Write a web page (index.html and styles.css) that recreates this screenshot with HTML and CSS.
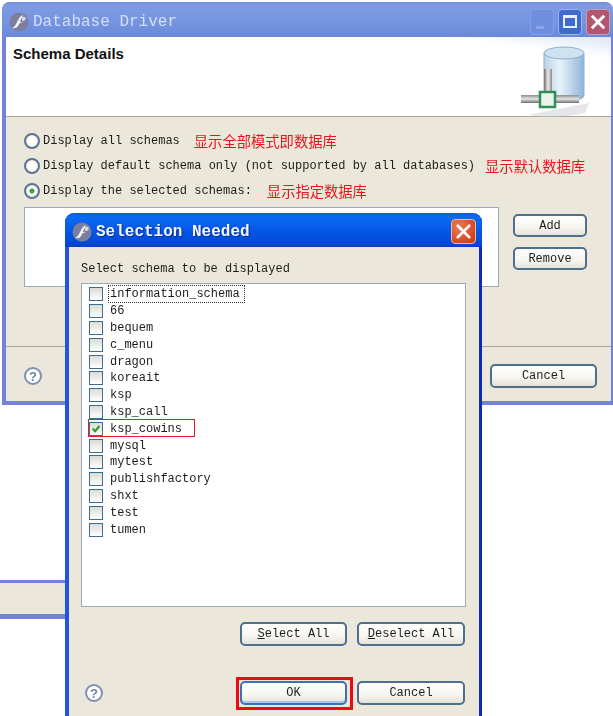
FILE: index.html
```html
<!DOCTYPE html>
<html lang="zh-CN">
<head>
  <meta charset="UTF-8" />
  <title>Selection Needed</title>
  <meta name="viewport" content="width=device-width, initial-scale=1.0" />
  <link rel="stylesheet" href="styles.css">
</head>
<body>
  <svg class="defs" width="0" height="0">
    <symbol id="eclipse" viewBox="0 0 20 20">
      <circle cx="10" cy="10" r="9.5" fill="#7b7f9e"/>
      <path d="M3 16 C8 15 8 5 14 3 C12 7 11 9 11 10 L14 10 C12 11 10 11 10 12 C9 15 7 17 3 16 Z" fill="#f2f3f8"/>
      <path d="M13 5 C17 4 18 7 15 9 L13 9 Z" fill="#d5d7e6"/>
    </symbol>
  </svg>

  <div class="desktop">
    <!-- window behind, only its lower edge shows -->
    <div class="strip"></div>

    <div class="window window-back">
      <div class="titlebar titlebar-back">
        <svg class="app-icon"><use href="#eclipse"/></svg>
        <span class="title-text">Database Driver</span>
        <span class="ctl ctl-min"><i></i></span>
        <span class="ctl ctl-max"><i></i></span>
        <span class="ctl ctl-close">
          <svg viewBox="0 0 16 16"><path d="M2.5 2.5 L13.5 13.5 M13.5 2.5 L2.5 13.5" stroke="#fff" stroke-width="2.6"/></svg>
        </span>
      </div>

      <div class="banner">
        <h2>Schema Details</h2>
        <svg class="db-icon" viewBox="0 0 80 74">
          <defs>
            <linearGradient id="cyl" x1="0" x2="1" y1="0" y2="0">
              <stop offset="0" stop-color="#b9d4e6"/>
              <stop offset="0.4" stop-color="#e8f3fa"/>
              <stop offset="1" stop-color="#8fb2d8"/>
            </linearGradient>
            <linearGradient id="pipe" x1="0" x2="0" y1="0" y2="1">
              <stop offset="0" stop-color="#8d8d8d"/>
              <stop offset="0.5" stop-color="#e6e6e6"/>
              <stop offset="1" stop-color="#6c6c6c"/>
            </linearGradient>
            <linearGradient id="pipev" x1="0" x2="1" y1="0" y2="0">
              <stop offset="0" stop-color="#6f6f6f"/>
              <stop offset="0.5" stop-color="#ececec"/>
              <stop offset="1" stop-color="#8a8a8a"/>
            </linearGradient>
          </defs>
          <path d="M8 70 L70 58 L66 68 Q40 74 8 70 Z" fill="#d8dbe0" opacity="0.7"/>
          <path d="M25 8 V50 Q25 56 45 56 Q65 56 65 50 V8 Z" fill="url(#cyl)" stroke="#8fb0cf"/>
          <ellipse cx="45" cy="8" rx="20" ry="6" fill="#cfe2ef" stroke="#8fb0cf"/>
          <rect x="25" y="24" width="8" height="30" fill="url(#pipev)"/>
          <rect x="2" y="50" width="58" height="8" fill="url(#pipe)"/>
          <rect x="21" y="47" width="15" height="15" fill="#e8f4ec" stroke="#2f8f57" stroke-width="2.5"/>
        </svg>
      </div>

      <div class="panel">
        <div class="radio-row"><span class="radio"></span><span>Display all schemas</span><span class="note note-a">显示全部模式即数据库</span></div>
        <div class="radio-row"><span class="radio"></span><span>Display default schema only (not supported by all databases)</span><span class="note note-b">显示默认数据库</span></div>
        <div class="radio-row"><span class="radio radio-on"></span><span>Display the selected schemas:</span><span class="note note-c">显示指定数据库</span></div>
        <div class="schema-row">
          <div class="box schema-box"></div>
          <div class="side-btns">
            <button class="btn btn-side">Add</button>
            <button class="btn btn-side">Remove</button>
          </div>
        </div>
      </div>

      <div class="footer footer-back">
        <span class="help">?</span>
        <button class="btn btn-cancel-back">Cancel</button>
      </div>
    </div>

    <div class="window dialog">
      <div class="titlebar titlebar-dialog">
        <svg class="app-icon"><use href="#eclipse"/></svg>
        <span class="title-text title-dialog">Selection Needed</span>
        <span class="ctl ctl-close-dialog">
          <svg viewBox="0 0 16 16"><path d="M2.5 2.5 L13.5 13.5 M13.5 2.5 L2.5 13.5" stroke="#fff" stroke-width="2.2"/></svg>
        </span>
      </div>

      <div class="dialog-body">
        <div class="dialog-label">Select schema to be displayed</div>
        <div class="box list-box">
          <div class="item"><span class="check"></span><span class="name name-focus">information_schema</span></div>
          <div class="item"><span class="check"></span><span class="name">66</span></div>
          <div class="item"><span class="check"></span><span class="name">bequem</span></div>
          <div class="item"><span class="check"></span><span class="name">c_menu</span></div>
          <div class="item"><span class="check"></span><span class="name">dragon</span></div>
          <div class="item"><span class="check"></span><span class="name">koreait</span></div>
          <div class="item"><span class="check"></span><span class="name">ksp</span></div>
          <div class="item"><span class="check"></span><span class="name">ksp_call</span></div>
          <div class="item item-marked">
            <span class="check">
              <svg viewBox="0 0 14 14"><path d="M3 6.5 L6 9.5 L11 3.5" fill="none" stroke="#21a121" stroke-width="2.4"/></svg>
            </span>
            <span class="name">ksp_cowins</span>
          </div>
          <div class="item"><span class="check"></span><span class="name">mysql</span></div>
          <div class="item"><span class="check"></span><span class="name">mytest</span></div>
          <div class="item"><span class="check"></span><span class="name">publishfactory</span></div>
          <div class="item"><span class="check"></span><span class="name">shxt</span></div>
          <div class="item"><span class="check"></span><span class="name">test</span></div>
          <div class="item"><span class="check"></span><span class="name">tumen</span></div>
        </div>

        <div class="select-btns">
          <button class="btn btn-wide"><u>S</u>elect All</button>
          <button class="btn btn-wider"><u>D</u>eselect All</button>
        </div>

        <div class="footer footer-dialog">
          <span class="help">?</span>
          <button class="btn btn-wide btn-ok">OK</button>
          <button class="btn btn-wider">Cancel</button>
        </div>
      </div>
    </div>
  </div>
</body>
</html>
```

FILE: styles.css
```css
html, body {
  margin: 0;
  background: #fff;
}

.defs {
  position: absolute;
}

.desktop {
  position: relative;
  width: 613px;
  height: 716px;
  overflow: hidden;
  font-family: "Liberation Mono", "Noto Sans CJK SC", monospace;
  font-size: 12px;
  color: #1c1c1c;
  filter: blur(0.35px);
}

.window {
  position: absolute;
  display: flex;
  flex-direction: column;
  box-sizing: border-box;
  background: #ebe8db;
}

.strip {
  position: absolute;
  left: 0;
  top: 580px;
  width: 70px;
  height: 39px;
  box-sizing: border-box;
  background: #ebe8db;
  border-top: 3px solid #7482dc;
  border-bottom: 5px solid #7482dc;
}

/* back window */
.window-back {
  left: 2px;
  top: 2px;
  width: 611px;
  height: 403px;
  border: solid #7482dc;
  border-width: 0 2px 4px 4px;
  border-radius: 8px 8px 0 0;
}

.titlebar {
  display: flex;
  align-items: center;
  flex: none;
  box-sizing: border-box;
}

.titlebar-back {
  height: 35px;
  margin: 0 -2px 0 -4px;
  padding: 4px 3px 0 7px;
  border-radius: 8px 8px 0 0;
  background: linear-gradient(to bottom, #6f8fdc 0, #7f9be2 10%, #7494e0 60%, #6a88d8 100%);
}

.app-icon {
  width: 20px;
  height: 20px;
  flex: none;
}

.title-text {
  flex: 1;
  margin-left: 4px;
  font-size: 16px;
  color: #d5dff5;
}

.ctl {
  display: flex;
  align-items: center;
  justify-content: center;
  flex: none;
  box-sizing: border-box;
  border-radius: 4px;
}

.ctl-min, .ctl-max, .ctl-close {
  width: 24px;
  height: 26px;
  margin-left: 4px;
  border: 1px solid #9fb4ea;
}

.ctl-min {
  background: #6f8edd;
  border-color: #86a0e6;
  align-items: flex-end;
  justify-content: flex-start;
}

.ctl-min i {
  width: 8px;
  height: 3px;
  margin: 0 0 5px 5px;
  background: #8ea5e6;
}

.ctl-max {
  background: #3f6bd0;
}

.ctl-max i {
  width: 14px;
  height: 13px;
  box-sizing: border-box;
  border: 2px solid #e8eefb;
  border-top-width: 3px;
}

.ctl-close {
  background: #b4566f;
  border-color: #c4a0b8;
}

.ctl-close svg {
  width: 18px;
  height: 18px;
}

.banner {
  display: flex;
  justify-content: space-between;
  flex: none;
  box-sizing: border-box;
  height: 80px;
  padding: 8px 12px 0 7px;
  border-bottom: 1px solid #aca899;
  background: linear-gradient(to bottom left, #dce7f6 0, #fff 14%, #fff 100%);
}

.banner h2 {
  margin: 0;
  font-family: "Liberation Sans", sans-serif;
  font-size: 15px;
  font-weight: bold;
  line-height: 18px;
  color: #111;
}

.db-icon {
  width: 80px;
  height: 74px;
}

.panel {
  flex: 1;
  padding: 11px 0 0 18px;
}

.radio-row {
  display: flex;
  align-items: center;
  height: 25px;
  white-space: nowrap;
}

.radio {
  flex: none;
  box-sizing: border-box;
  width: 16px;
  height: 16px;
  margin-right: 3px;
  border: 2px solid #5b7396;
  border-radius: 50%;
  background: radial-gradient(circle, #fff 40%, #dcdcd4 100%);
}

.radio-on {
  background: radial-gradient(circle, #36a83f 0, #36a83f 26%, #fff 34%, #e2e2da 100%);
}

.note {
  font-family: "Noto Sans CJK SC", sans-serif;
  font-size: 14.3px;
  line-height: 18px;
  color: #e8141c;
}

.note-a {
  margin-left: 14px;
}

.note-b {
  margin-left: 10px;
}

.note-c {
  margin-left: 15px;
}

.schema-row {
  display: flex;
  margin-top: 4px;
}

.box {
  box-sizing: border-box;
  background: #fff;
  border: 1px solid #98abbd;
}

.schema-box {
  width: 475px;
  height: 80px;
}

.side-btns {
  display: flex;
  flex-direction: column;
  gap: 10px;
  margin: 7px 0 0 14px;
}

.btn {
  box-sizing: border-box;
  padding: 0;
  font: inherit;
  color: #1c1c1c;
  border: 2px solid #4f6f8c;
  border-radius: 5px;
  background: linear-gradient(to bottom, #fff 0, #f6f5f0 60%, #e4e2d8 100%);
}

.btn-side {
  width: 74px;
  height: 23px;
}

.footer {
  display: flex;
  align-items: center;
  flex: none;
}

.footer-back {
  box-sizing: border-box;
  height: 55px;
  padding: 17px 14px 0 18px;
  align-items: flex-start;
  justify-content: space-between;
  border-top: 1px solid #aca899;
}

.btn-cancel-back {
  width: 107px;
  height: 24px;
}

.help {
  display: flex;
  align-items: center;
  justify-content: center;
  flex: none;
  box-sizing: border-box;
  width: 18px;
  height: 18px;
  margin-top: 3px;
  border: 2px solid #7d90b4;
  border-radius: 50%;
  background: #fff;
  font-family: "Liberation Sans", sans-serif;
  font-size: 13px;
  font-weight: bold;
  color: #6b7fa6;
}

/* front dialog */
.dialog {
  left: 65px;
  top: 213px;
  width: 417px;
  height: 520px;
  border-style: solid;
  border-color: #1f56dc #0a2bb4 #0a2bb4 #1f56dc;
  border-width: 0 3px 3px 4px;
  border-radius: 9px 9px 0 0;
}

.titlebar-dialog {
  height: 34px;
  margin: 0 -3px 0 -4px;
  padding: 3px 6px 0 7px;
  border-radius: 9px 9px 0 0;
  background: linear-gradient(to bottom, #0a5be4 0, #0a6af2 12%, #0556e6 55%, #0349d8 88%, #0a3fc0 100%);
}

.title-dialog {
  font-weight: bold;
  color: #f4f7ff;
  text-shadow: 1px 1px 1px #0a2a8c;
}

.ctl-close-dialog {
  width: 25px;
  height: 25px;
  border: 1px solid #f0b8a8;
  background: radial-gradient(circle at 30% 30%, #ec7b55, #d0411c 80%);
}

.ctl-close-dialog svg {
  width: 19px;
  height: 19px;
}

.dialog-body {
  flex: 1;
  padding: 14px 13px 0 12px;
}

.dialog-label {
  height: 16px;
  line-height: 16px;
  white-space: nowrap;
}

.list-box {
  height: 324px;
  margin-top: 6px;
  padding: 2px 0 0 7px;
}

.item {
  position: relative;
  display: flex;
  align-items: center;
  height: 16.8px;
}

.check {
  display: block;
  flex: none;
  box-sizing: border-box;
  width: 14px;
  height: 14px;
  margin-right: 7px;
  border: 1px solid #3f6c94;
  background: linear-gradient(to bottom, #dcdcd6 0, #f4f4f0 70%, #fff 100%);
}

.check svg {
  display: block;
  width: 12px;
  height: 12px;
}

.name {
  line-height: 16px;
  white-space: nowrap;
}

.name-focus {
  padding-right: 3px;
  line-height: 14px;
  outline: 1px dotted #333;
  outline-offset: 1px;
}

/* red marks drawn over the screenshot */
.item-marked::after {
  content: "";
  position: absolute;
  left: -1px;
  top: -1px;
  width: 107px;
  height: 18px;
  box-sizing: border-box;
  border: 1px solid #e0202c;
}

.select-btns {
  display: flex;
  justify-content: flex-end;
  gap: 10px;
  margin: 15px 1px 0 0;
}

.btn-wide {
  width: 107px;
  height: 24px;
}

.btn-wider {
  width: 108px;
  height: 24px;
}

.footer-dialog {
  gap: 10px;
  margin: 35px 1px 0 0;
}

.footer-dialog .help {
  margin: 0 auto 0 4px;
}

.btn-ok {
  position: relative;
  border-color: #3f6fb4;
  box-shadow: inset 0 -2px 0 #a9c4e8;
}

.btn-ok::after {
  content: "";
  position: absolute;
  left: -6px;
  top: -6px;
  right: -8px;
  bottom: -7px;
  border: 3px solid #ee0a12;
}
```
